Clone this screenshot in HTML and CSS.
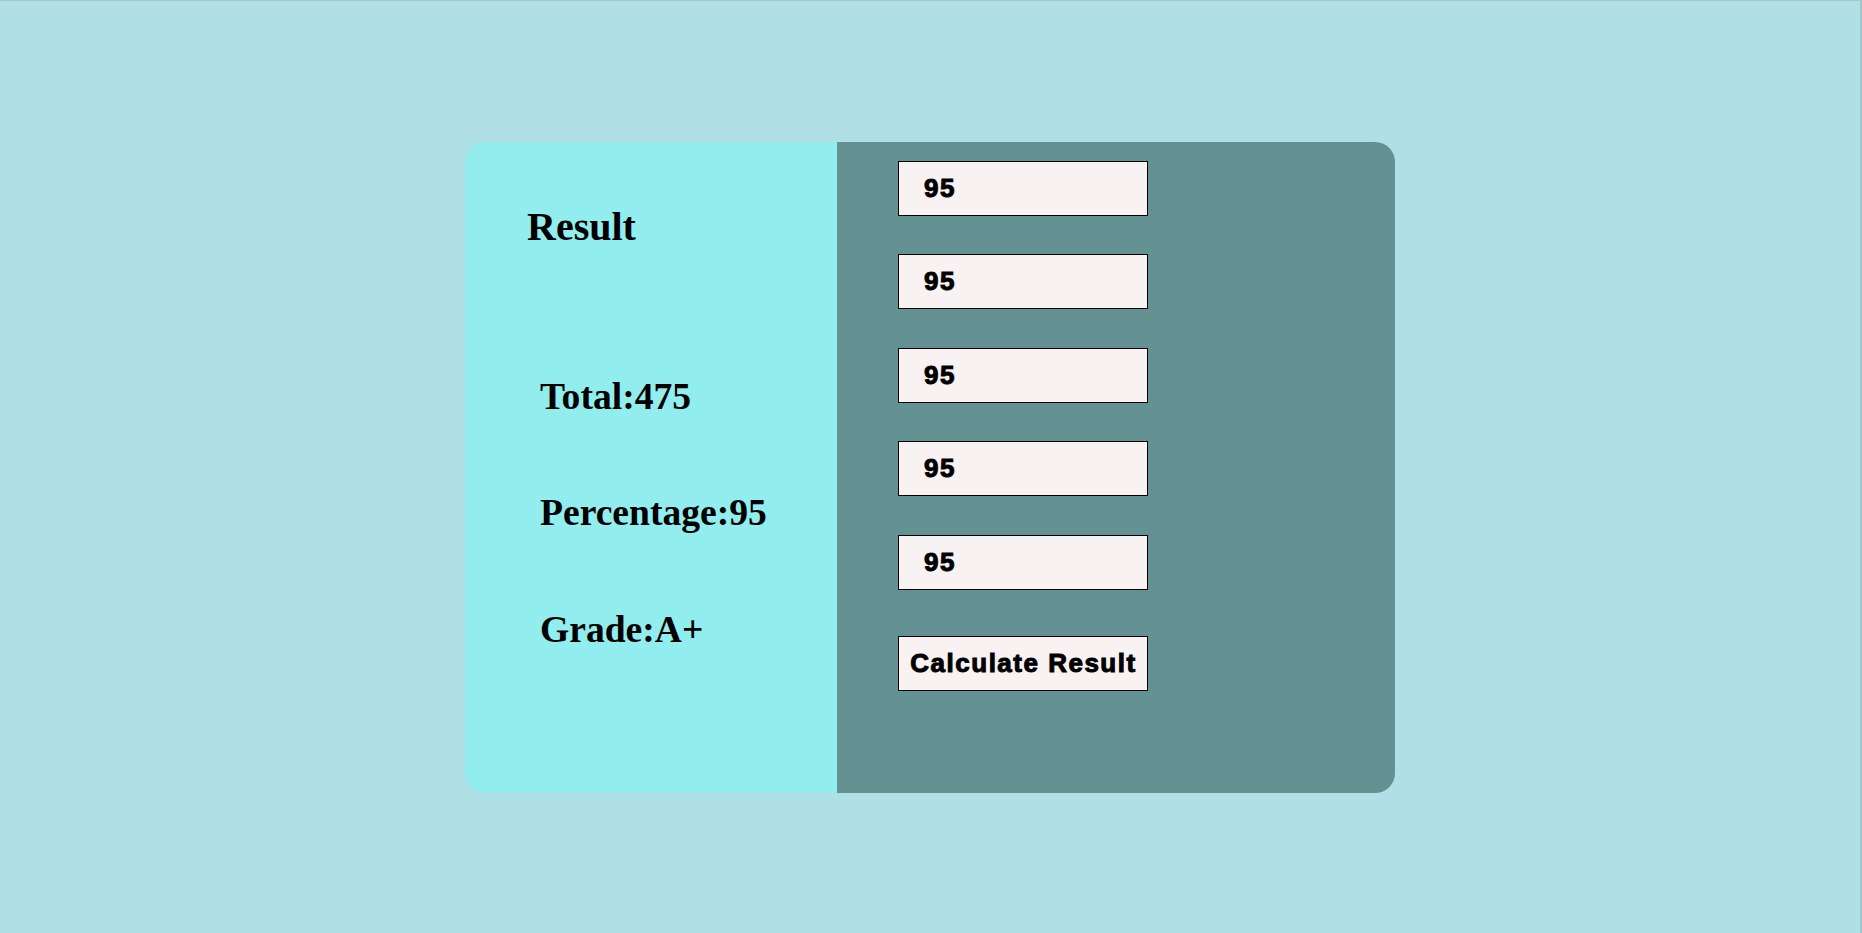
FILE: index.html
```html
<!DOCTYPE html>
<html lang="en">
<head>
<meta charset="utf-8">
<title>Result Calculator</title>
<link rel="stylesheet" href="styles.css">
</head>
<body>
  <main class="card">
    <section class="result-panel">
      <h1 class="result-title">Result</h1>
      <div class="stats">
        <p class="stat">Total:475</p>
        <p class="stat">Percentage:95</p>
        <p class="stat">Grade:A+</p>
      </div>
    </section>
    <section class="form-panel">
      <input class="mark-input" type="text" value="95">
      <input class="mark-input" type="text" value="95">
      <input class="mark-input" type="text" value="95">
      <input class="mark-input" type="text" value="95">
      <input class="mark-input" type="text" value="95">
      <button class="calc-btn" type="button">Calculate Result</button>
    </section>
  </main>
</body>
</html>
```

FILE: styles.css
```css
* {
  box-sizing: border-box;
}

html, body {
  margin: 0;
  padding: 0;
}

body {
  height: 100vh;
  background: #b0dfe5;
  border-top: 1px solid #a4c6ca;
  border-right: 2px solid #a4c6ca;
  display: flex;
  align-items: center;
  justify-content: center;
  font-family: "Liberation Serif", "Times New Roman", serif;
}

.card {
  width: 930px;
  height: 651px;
  display: flex;
  border-radius: 20px;
  overflow: hidden;
}

.result-panel {
  width: 372px;
  background: #92eeee;
  padding: 61px 0 0 62px;
  display: flex;
  flex-direction: column;
}

.result-title {
  margin: 0;
  font-size: 40px;
  line-height: 48px;
  font-weight: bold;
  color: #000;
}

.stats {
  margin-top: 124px;
  padding-left: 13px;
  display: flex;
  flex-direction: column;
  gap: 72.5px;
}

.stat {
  margin: 0;
  font-size: 37.6px;
  line-height: 44px;
  font-weight: bold;
  color: #000;
}

.form-panel {
  flex: 1;
  background: #649191;
  padding: 19px 0 0 61px;
  display: flex;
  flex-direction: column;
  align-items: flex-start;
  gap: 38.5px;
}

.mark-input,
.calc-btn {
  width: 250px;
  height: 55px;
  margin: 0;
  background: #f8f2f2;
  border: 1px solid #000;
  border-radius: 0;
  font-family: "Liberation Sans", Arial, sans-serif;
  font-size: 26px;
  font-weight: bold;
  letter-spacing: 1.5px;
  -webkit-text-stroke: 1px #000;
  color: #000;
  outline: none;
}

.mark-input {
  padding: 0 0 0 25px;
}

.calc-btn {
  margin-top: 7.5px;
  padding: 0 0 0 1px;
  text-align: center;
  cursor: pointer;
}
```
